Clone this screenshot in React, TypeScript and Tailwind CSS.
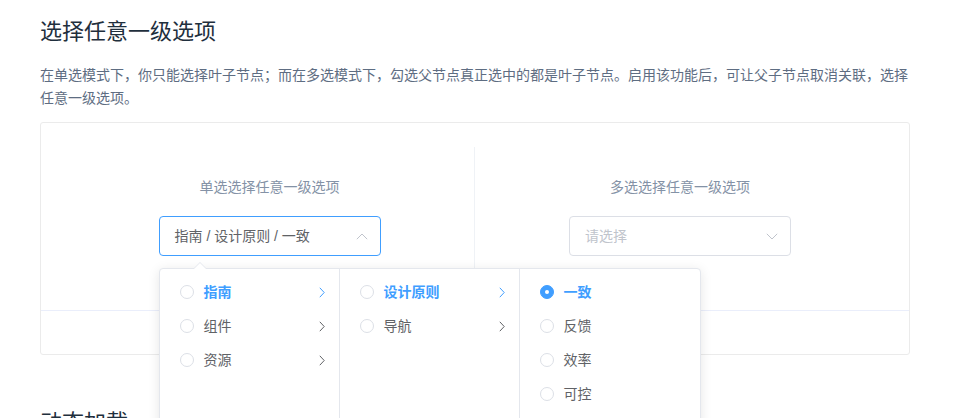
import React from "react";

const FONT = {
  fontFamily:
    '"Helvetica Neue", Helvetica, Arial, "Noto Sans CJK SC", sans-serif',
};

type Item = { label: string; active?: boolean; checked?: boolean; arrow?: boolean };

const COLUMNS: Item[][] = [
  [
    { label: "指南", active: true, arrow: true },
    { label: "组件", arrow: true },
    { label: "资源", arrow: true },
  ],
  [
    { label: "设计原则", active: true, arrow: true },
    { label: "导航", arrow: true },
  ],
  [
    { label: "一致", active: true, checked: true },
    { label: "反馈" },
    { label: "效率" },
    { label: "可控" },
  ],
];

function Chevron({ dir, className }: { dir: "up" | "down" | "right"; className?: string }) {
  if (dir === "right") {
    return (
      <svg width="6" height="11" viewBox="0 0 6 11" className={className} fill="none">
        <path d="M0.8 0.8 L5.2 5.5 L0.8 10.2" stroke="currentColor" strokeWidth="1" />
      </svg>
    );
  }
  return (
    <svg width="12" height="7" viewBox="0 0 12 7" className={className} fill="none">
      {dir === "up" ? (
        <path d="M0.8 6.2 L6 1 L11.2 6.2" stroke="currentColor" strokeWidth="1" />
      ) : (
        <path d="M0.8 0.8 L6 6 L11.2 0.8" stroke="currentColor" strokeWidth="1" />
      )}
    </svg>
  );
}

function Radio({ checked }: { checked?: boolean }) {
  if (checked) {
    return (
      <span className="w-[14px] h-[14px] rounded-full bg-[#409eff] border border-[#409eff] flex items-center justify-center shrink-0">
        <span className="w-[4px] h-[4px] rounded-full bg-white" />
      </span>
    );
  }
  return <span className="w-[14px] h-[14px] rounded-full border border-[#dcdfe6] bg-white shrink-0" />;
}

function Dropdown() {
  return (
    <div className="absolute left-0 top-[calc(100%+12px)] z-10">
      {/* arrow */}
      <div className="absolute -top-[6px] left-[35px] w-0 h-0 border-x-[6px] border-x-transparent border-b-[6px] border-b-[#e4e7ed]" />
      <div className="absolute -top-[5px] left-[35px] w-0 h-0 border-x-[6px] border-x-transparent border-b-[6px] border-b-white" />
      <div className="flex bg-white border border-[#e4e7ed] rounded-[4px] shadow-[0_2px_12px_0_rgba(0,0,0,0.1)]">
        {COLUMNS.map((col, ci) => (
          <ul
            key={ci}
            className={`w-[180px] h-[204px] py-[6px] ${ci < COLUMNS.length - 1 ? "border-r border-[#e4e7ed]" : ""}`}
          >
            {col.map((it) => (
              <li
                key={it.label}
                className="h-[34px] flex items-center pl-[20px] pr-[14px] text-[14px]"
              >
                <Radio checked={it.checked} />
                <span
                  className={`flex-1 text-left pl-[10px] ${
                    it.active ? "text-[#409eff] font-bold" : "text-[#606266]"
                  }`}
                >
                  {it.label}
                </span>
                {it.arrow && (
                  <Chevron
                    dir="right"
                    className={it.active ? "text-[#409eff]" : "text-[#606266]"}
                  />
                )}
              </li>
            ))}
          </ul>
        ))}
      </div>
    </div>
  );
}

export default function App() {
  return (
    <div className="w-[960px] h-[418px] overflow-hidden bg-white" style={FONT}>
      <div className="ml-[40px] w-[870px]">
        <h3 className="pt-[18px] text-[22px] leading-[28px] font-normal text-[#1f2f3d]">
          选择任意一级选项
        </h3>
        <p className="mt-[18px] text-[14px] leading-[23px] text-[#5e6d82]">
          在单选模式下，你只能选择叶子节点；而在多选模式下，勾选父节点真正选中的都是叶子节点。启用该功能后，可让父子节点取消关联，选择任意一级选项。
        </p>

        <div className="mt-[12px] border border-[#ebebeb] rounded-[3px]">
          <div className="p-[24px] flex">
            <div className="w-1/2 py-[30px] border-r border-[#eff2f6] flex flex-col items-center">
              <span className="text-[14px] leading-[20px] text-[#8492a6] mb-[19px]">
                单选选择任意一级选项
              </span>
              <div className="relative">
                <div className="w-[222px] h-[40px] border border-[#409eff] rounded-[4px] flex items-center pl-[15px] pr-[12px] text-[14px] text-[#606266]">
                  <span className="flex-1">指南 / 设计原则 / 一致</span>
                  <Chevron dir="up" className="text-[#c0c4cc]" />
                </div>
                <Dropdown />
              </div>
            </div>
            <div className="w-1/2 py-[30px] flex flex-col items-center">
              <span className="text-[14px] leading-[20px] text-[#8492a6] mb-[19px]">
                多选选择任意一级选项
              </span>
              <div className="w-[222px] h-[40px] border border-[#dcdfe6] rounded-[4px] flex items-center pl-[15px] pr-[12px] text-[14px] text-[#c0c4cc]">
                <span className="flex-1">请选择</span>
                <Chevron dir="down" className="text-[#c0c4cc]" />
              </div>
            </div>
          </div>
          <div className="h-[44px] border-t border-[#eaeefb]" />
        </div>

        <h3 className="mt-[54px] text-[22px] leading-[28px] font-normal text-[#1f2f3d]">
          动态加载
        </h3>
      </div>
    </div>
  );
}
